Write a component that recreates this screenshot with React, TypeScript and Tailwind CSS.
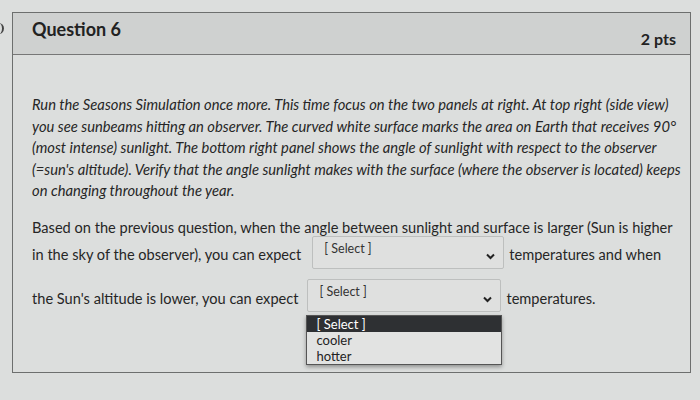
import React from "react";

function Chevron() {
  return (
    <svg width="9" height="7" viewBox="0 0 9 7" className="shrink-0">
      <path d="M1 1.5 L4.5 5 L8 1.5" stroke="#222" strokeWidth="2" fill="none" />
    </svg>
  );
}

function SelectBox({ w }: { w: string }) {
  return (
    <div className={`${w} h-[33px] border border-[#bdbfbe] rounded-[2px] bg-[#dfe0df] flex items-start justify-between pl-[11px] pr-[8px] pt-[4px]`}>
      <span className="text-[12.5px] text-[#333] leading-[16px]">[ Select ]</span>
      <span className="mt-[12px]"><Chevron /></span>
    </div>
  );
}

export default function App() {
  return (
    <div
      className="w-[700px] h-[400px] bg-[#dcdedd] overflow-hidden relative text-[#222]"
      style={{ fontFamily: "Lato, 'Open Sans', sans-serif" }}
    >
      <div className="absolute left-[-5px] top-[23px] w-[9px] h-[11px] border-r-2 border-[#444] rounded-r-full" />
      <div className="pt-[12px] pl-[12px]">
        <div className="w-[679px] h-[361px] border border-[#6d6f6e] flex flex-col">
          <div className="h-[42px] bg-[#cfd1d0] border-b border-[#777] flex items-start justify-between px-[19px] pt-[4px]">
            <span className="text-[18px] font-bold leading-[24px]">Question 6</span>
            <span className="text-[16px] font-bold leading-[20px] mt-[12px] mr-[-5px]">2 pts</span>
          </div>
          <div className="pl-[19px] pt-[39px] flex flex-col">
            <div className="italic text-[14.75px] leading-[21.6px] whitespace-nowrap text-[#262626]">
              <div>Run the Seasons Simulation once more. This time focus on the two panels at right. At top right (side view)</div>
              <div>you see sunbeams hitting an observer. The curved white surface marks the area on Earth that receives 90°</div>
              <div>(most intense) sunlight. The bottom right panel shows the angle of sunlight with respect to the observer</div>
              <div>(=sun's altitude). Verify that the angle sunlight makes with the surface (where the observer is located) keeps</div>
              <div>on changing throughout the year.</div>
            </div>
            <div className="mt-[15px] text-[14.6px] leading-[22px] whitespace-nowrap text-[#262626]">
              Based on the previous question, when the angle between sunlight and surface is larger (Sun is higher
            </div>
            <div className="mt-[-3px] flex items-start text-[14.6px] leading-[22px] whitespace-nowrap text-[#262626]">
              <span className="mt-[8px]">in the sky of the observer), you can expect</span>
              <div className="ml-[11px]"><SelectBox w="w-[192px]" /></div>
              <span className="ml-[5px] mt-[8px]">temperatures and when</span>
            </div>
            <div className="mt-[10px] flex items-start text-[14.6px] leading-[22px] whitespace-nowrap text-[#262626]">
              <span className="mt-[9px]">the Sun's altitude is lower, you can expect</span>
              <div className="ml-[9px] relative">
                <SelectBox w="w-[194px]" />
                <div className="absolute left-[-1px] top-[36px] w-[196px] border border-[#555] bg-[#e2e3e2] shadow-[0_2px_4px_rgba(0,0,0,0.35)] text-[13px] leading-[16px] text-[#222]">
                  <div className="bg-[#2e3033] text-white px-[9px]">[ Select ]</div>
                  <div className="px-[9px]">cooler</div>
                  <div className="px-[9px]">hotter</div>
                </div>
              </div>
              <span className="ml-[5px] mt-[9px]">temperatures.</span>
            </div>
          </div>
        </div>
      </div>
    </div>
  );
}
